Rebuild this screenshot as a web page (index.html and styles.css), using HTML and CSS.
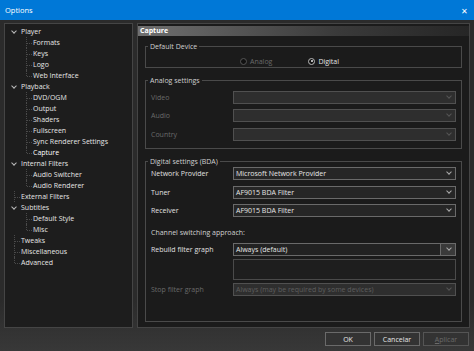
FILE: index.html
```html
<!DOCTYPE html>
<html lang="en">
<head>
    <title>Options</title>
    <link rel="stylesheet" href="styles.css">
</head>
<body>
    <div class="window">
        <div class="titlebar">
            <span class="title">Options</span>
            <span class="close">&#x2715;</span>
        </div>

        <div class="main">
            <!-- Left page tree -->
            <div class="tree">
                <div class="node open">Player</div>
                <div class="node child">Formats</div>
                <div class="node child">Keys</div>
                <div class="node child">Logo</div>
                <div class="node child last">Web Interface</div>
                <div class="node open">Playback</div>
                <div class="node child">DVD/OGM</div>
                <div class="node child">Output</div>
                <div class="node child">Shaders</div>
                <div class="node child">Fullscreen</div>
                <div class="node child">Sync Renderer Settings</div>
                <div class="node child last selected">Capture</div>
                <div class="node open">Internal Filters</div>
                <div class="node child">Audio Switcher</div>
                <div class="node child last">Audio Renderer</div>
                <div class="node leaf">External Filters</div>
                <div class="node open">Subtitles</div>
                <div class="node child">Default Style</div>
                <div class="node child last">Misc</div>
                <div class="node leaf">Tweaks</div>
                <div class="node leaf">Miscellaneous</div>
                <div class="node leaf lastroot">Advanced</div>
            </div>

            <!-- Right page -->
            <div class="page">
                <div class="page-header">Capture</div>

                <fieldset class="group group-device">
                    <legend>Default Device</legend>
                    <div class="radios">
                        <label class="radio disabled"><span class="dot"></span>Analog</label>
                        <label class="radio"><span class="dot checked"></span>Digital</label>
                    </div>
                </fieldset>

                <fieldset class="group group-analog">
                    <legend>Analog settings</legend>
                    <div class="row disabled">
                        <span class="label">Video</span>
                        <div class="combo"><span class="text"></span><span class="arrow"></span></div>
                    </div>
                    <div class="row disabled">
                        <span class="label">Audio</span>
                        <div class="combo"><span class="text"></span><span class="arrow"></span></div>
                    </div>
                    <div class="row disabled">
                        <span class="label">Country</span>
                        <div class="combo"><span class="text"></span><span class="arrow"></span></div>
                    </div>
                </fieldset>

                <fieldset class="group group-digital">
                    <legend>Digital settings (BDA)</legend>
                    <div class="row">
                        <span class="label">Network Provider</span>
                        <div class="combo"><span class="text">Microsoft Network Provider</span><span class="arrow"></span></div>
                    </div>
                    <div class="row">
                        <span class="label">Tuner</span>
                        <div class="combo"><span class="text">AF9015 BDA Filter</span><span class="arrow"></span></div>
                    </div>
                    <div class="row">
                        <span class="label">Receiver</span>
                        <div class="combo"><span class="text">AF9015 BDA Filter</span><span class="arrow"></span></div>
                    </div>
                    <div class="approach">Channel switching approach:</div>
                    <div class="row">
                        <span class="label">Rebuild filter graph</span>
                        <div class="combo editable"><span class="text">Always (default)</span><span class="arrow"></span></div>
                    </div>
                    <div class="row">
                        <span class="label"></span>
                        <div class="infobox"></div>
                    </div>
                    <div class="row disabled">
                        <span class="label">Stop filter graph</span>
                        <div class="combo"><span class="text">Always (may be required by some devices)</span><span class="arrow"></span></div>
                    </div>
                </fieldset>
            </div>
        </div>

        <div class="buttons">
            <button class="btn" type="button">OK</button>
            <button class="btn" type="button">Cancelar</button>
            <button class="btn disabled" type="button"><u>A</u>plicar</button>
        </div>
    </div>
</body>
</html>
```

FILE: styles.css
```css
body {
    margin: 0;
    padding: 0;
    font-family: "Open Sans", "Noto Sans", sans-serif;
    font-size: 7px;
    color: #d8d8d8;
    background-color: #2b2b2b;
}

.window {
    width: 474px;
    height: 351px;
    display: flex;
    flex-direction: column;
    background: linear-gradient(#2b2b2b 0, #2b2b2b 300px, #383838 351px);
}

.titlebar {
    height: 20px;
    background-color: #0078d7;
    display: flex;
    align-items: center;
    justify-content: space-between;
    padding: 0 6px 0 5px;
    color: #fff;
}

.title {
    font-size: 7.5px;
}

.close {
    font-size: 8px;
}

.main {
    display: flex;
    gap: 4px;
    padding: 3px 4px 0 4px;
    height: 305px;
}

/* tree */
.tree {
    width: 127px;
    border: 1px solid #454545;
    background-color: #1d1d1d;
    padding-top: 2px;
}

.node {
    position: relative;
    height: 11px;
    line-height: 11px;
    padding-left: 16px;
    color: #e6e6e6;
    white-space: nowrap;
}

.node.open::before {
    content: "";
    position: absolute;
    left: 7px;
    top: 3px;
    width: 3px;
    height: 3px;
    border-right: 1px solid #bbb;
    border-bottom: 1px solid #bbb;
    transform: rotate(45deg);
}

.node.leaf::before,
.node.child::before {
    content: "";
    position: absolute;
    top: 0;
    height: 11px;
    border-left: 1px dotted #4a4a4a;
}

.node.leaf::before {
    left: 9px;
}

.node.leaf::after,
.node.child::after {
    content: "";
    position: absolute;
    top: 6px;
    width: 5px;
    border-top: 1px dotted #4a4a4a;
}

.node.leaf::after {
    left: 10px;
}

.node.child {
    padding-left: 28px;
}

.node.child::before {
    left: 21px;
}

.node.child::after {
    left: 22px;
}

.node.child.last::before,
.node.lastroot::before {
    height: 6px;
}

.node.selected {
    color: #fff;
}

/* right page */
.page {
    flex: 1;
    border: 1px solid #454545;
    background-color: #1b1b1b;
    padding: 2px 7px 0 0;
}

.page-header {
    height: 10px;
    line-height: 10px;
    font-weight: bold;
    color: #fff;
    padding-left: 2px;
    background: linear-gradient(to right, #707070, #3a3a3a 60%, #262626);
    margin-right: -7px;
}

.group {
    border: 1px solid #4a4a4a;
    margin: 0 0 0 7px;
    padding: 0 5px 0 5px;
}

.group legend {
    padding: 0 2px;
    margin-left: -3px;
    color: #d0d0d0;
}

.group-device {
    margin-top: 6px;
    height: 24px;
}

.radios {
    display: flex;
    padding-left: 89px;
    gap: 36px;
    height: 20px;
    align-items: center;
}

.radio {
    display: flex;
    align-items: center;
    gap: 3px;
    color: #e6e6e6;
}

.radio.disabled {
    color: #6a6a6a;
}

.dot {
    width: 7px;
    height: 7px;
    border: 1px solid #bbb;
    border-radius: 50%;
    box-sizing: border-box;
    background-color: #111;
    position: relative;
}

.radio.disabled .dot {
    border-color: #555;
}

.dot.checked::after {
    content: "";
    position: absolute;
    left: 1.5px;
    top: 1.5px;
    width: 2px;
    height: 2px;
    border-radius: 50%;
    background-color: #eee;
}

.group + .group {
    margin-top: 8px;
}

.group-analog {
    padding-bottom: 7px;
}

.row {
    display: flex;
    align-items: center;
    margin-top: 5.5px;
}

.label {
    width: 82px;
    color: #e0e0e0;
}

.row.disabled .label {
    color: #6a6a6a;
}

.combo {
    width: 223px;
    height: 13px;
    box-sizing: border-box;
    border: 1px solid #6a6a6a;
    background-color: #262626;
    display: flex;
    align-items: center;
}

.combo .text {
    flex: 1;
    padding-left: 2px;
    white-space: nowrap;
    color: #e6e6e6;
}

.combo .arrow {
    width: 12px;
    height: 11px;
    position: relative;
}

.combo .arrow::after {
    content: "";
    position: absolute;
    left: 4px;
    top: 2px;
    width: 3px;
    height: 3px;
    border-right: 1px solid #aaa;
    border-bottom: 1px solid #aaa;
    transform: rotate(45deg);
}

.row.disabled .combo {
    border-color: #505050;
    background-color: #2e2e2e;
}

.row.disabled .combo .text {
    color: #5e5e5e;
}

.row.disabled .combo .arrow::after {
    border-color: #555;
}

.combo.editable {
    background-color: #3a3a3a;
}

.combo.editable .text {
    background-color: #222;
    border-right: 1px solid #6a6a6a;
    height: 11px;
    line-height: 11px;
    margin-right: 2px;
}

.infobox {
    width: 223px;
    height: 21px;
    box-sizing: border-box;
    border: 1px solid #4a4a4a;
    background-color: #1e1e1e;
    margin-top: -2px;
}

.approach {
    margin-top: 11px;
    color: #d0d0d0;
}

.group-digital {
    height: 163px;
}

.group-digital .row:first-of-type {
    margin-top: 1.5px;
}

.group-digital .row.disabled {
    margin-top: 3px;
}

/* buttons */
.buttons {
    display: flex;
    justify-content: flex-end;
    gap: 3px;
    padding: 4px 5px 0 0;
}

.btn {
    width: 46px;
    height: 14px;
    padding: 0;
    font-family: inherit;
    font-size: 7px;
    color: #e6e6e6;
    background-color: #333;
    border: 1px solid #6a6a6a;
}

.btn.disabled {
    color: #6a6a6a;
    border-color: #555;
}
```
